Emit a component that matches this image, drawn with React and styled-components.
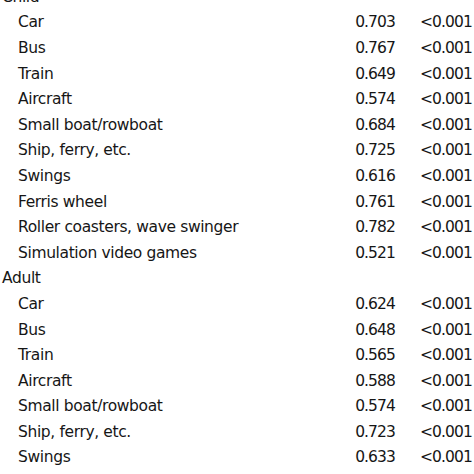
import React from "react";
import styled, { createGlobalStyle } from "styled-components";

const Global = createGlobalStyle`
  html, body { margin: 0; padding: 0; background: #fff; }
  body { width: 474px; height: 474px; overflow: hidden; }
`;

const Table = styled.div`
  display: grid;
  grid-template-columns: 1fr 60px 77px;
  margin-top: -16px;
  padding: 0 2px 0 2px;
  font-family: "DejaVu Sans", sans-serif;
  font-size: 15.5px;
  letter-spacing: -0.37px;
  color: #161616;
  grid-auto-rows: 25.6px;
  align-items: center;
`;

const Label = styled.div`
  padding-left: ${(p) => (p.$group ? "0" : "16px")};
  white-space: nowrap;
`;

const Num = styled.div`
  text-align: right;
  white-space: nowrap;
  letter-spacing: -0.9px;
`;

const data = [
  {
    group: "Child",
    rows: [
      ["Car", "0.703"],
      ["Bus", "0.767"],
      ["Train", "0.649"],
      ["Aircraft", "0.574"],
      ["Small boat/rowboat", "0.684"],
      ["Ship, ferry, etc.", "0.725"],
      ["Swings", "0.616"],
      ["Ferris wheel", "0.761"],
      ["Roller coasters, wave swinger", "0.782"],
      ["Simulation video games", "0.521"],
    ],
  },
  {
    group: "Adult",
    rows: [
      ["Car", "0.624"],
      ["Bus", "0.648"],
      ["Train", "0.565"],
      ["Aircraft", "0.588"],
      ["Small boat/rowboat", "0.574"],
      ["Ship, ferry, etc.", "0.723"],
      ["Swings", "0.633"],
    ],
  },
];

export default function App() {
  return (
    <>
      <Global />
      <Table>
        {data.map((g) => (
          <React.Fragment key={g.group}>
            <Label $group>{g.group}</Label>
            <Num />
            <Num />
            {g.rows.map(([name, v]) => (
              <React.Fragment key={g.group + name}>
                <Label>{name}</Label>
                <Num>{v}</Num>
                <Num>&lt;0.001</Num>
              </React.Fragment>
            ))}
          </React.Fragment>
        ))}
      </Table>
    </>
  );
}
